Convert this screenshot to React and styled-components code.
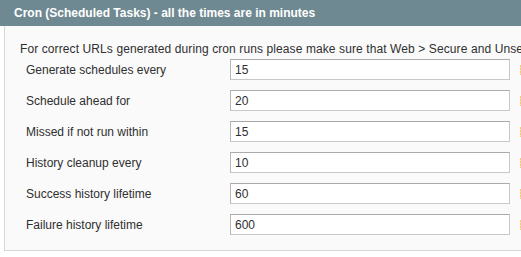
import styled, { createGlobalStyle } from 'styled-components';

const Global = createGlobalStyle`
  body {
    margin: 0;
    background: #fff;
    font-family: "Liberation Sans", Arial, sans-serif;
    font-size: 12px;
    color: #2f2f2f;
  }
`;

const fields = [
  { label: 'Generate schedules every', value: '15' },
  { label: 'Schedule ahead for', value: '20' },
  { label: 'Missed if not run within', value: '15' },
  { label: 'History cleanup every', value: '10' },
  { label: 'Success history lifetime', value: '60' },
  { label: 'Failure history lifetime', value: '600' },
];

export default function App() {
  return (
    <>
      <Global />
      <Page>
        <Head>Cron (Scheduled Tasks) - all the times are in minutes</Head>
        <Fieldset>
          <Intro>
            For correct URLs generated during cron runs please make sure that Web &gt; Secure and Unsecure Base URLs are explicitly set.
          </Intro>
          <Rows>
            {fields.map((f) => (
              <Row key={f.label}>
                <Label>{f.label}</Label>
                <Input defaultValue={f.value} />
                <Scope />
              </Row>
            ))}
          </Rows>
        </Fieldset>
      </Page>
    </>
  );
}

const Page = styled.div`
  width: 521px;
  height: 257px;
  overflow: hidden;
`;

const Head = styled.div`
  height: 26px;
  line-height: 26px;
  padding-left: 14px;
  background: #6f8992;
  color: #fff;
  font-weight: bold;
  font-size: 12px;
  white-space: nowrap;
`;

const Fieldset = styled.div`
  margin-left: 4px;
  width: 560px;
  height: 225px;
  box-sizing: border-box;
  border: 1px solid #d6d6d6;
  border-top: none;
  background: #fafafa;
  padding: 16px 0 0 15px;
`;

const Intro = styled.div`
  line-height: 15px;
  letter-spacing: 0.1px;
  white-space: nowrap;
  overflow: hidden;
`;

const Rows = styled.div`
  display: flex;
  flex-direction: column;
  gap: 10px;
  margin-top: 2px;
  padding-left: 6px;
`;

const Row = styled.div`
  display: flex;
  align-items: center;
  height: 21px;
`;

const Label = styled.div`
  width: 204px;
  flex-shrink: 0;
`;

const Input = styled.input`
  width: 280px;
  height: 21px;
  box-sizing: border-box;
  flex-shrink: 0;
  margin: 0;
  padding: 0 4px;
  border: 1px solid #c8c8c8;
  border-top-color: #aaa;
  border-left-color: #b8b8b8;
  background: #fff;
  font-family: "Liberation Sans", Arial, sans-serif;
  font-size: 12px;
  color: #2f2f2f;
  outline: none;
`;

const Scope = styled.span`
  width: 8px;
  height: 10px;
  margin-left: 10px;
  flex-shrink: 0;
  background: repeating-linear-gradient(180deg, #f7c97a 0 2px, #fbe0ae 2px 3px);
`;
